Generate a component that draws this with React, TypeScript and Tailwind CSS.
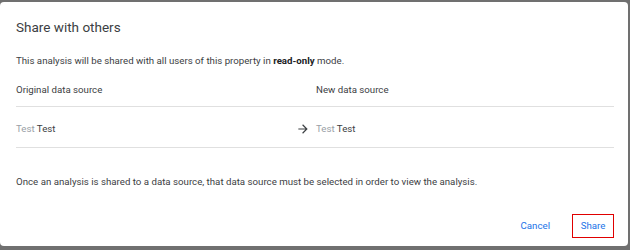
export default function App() {
  return (
    <div
      className="w-[630px] h-[250px] bg-[#707070] pt-[2px] pr-[2px] pb-[4px] overflow-hidden"
      style={{ fontFamily: "Roboto, 'Liberation Sans', sans-serif" }}
    >
      <div className="h-full bg-white rounded-[4px] flex flex-col pl-4 pr-[14px]">
        <h2 className="text-[13.5px] text-[#3c4043] mt-[15px] leading-[20px]">Share with others</h2>

        <p className="text-[9.7px] text-[#3c4043] mt-[17px] leading-[14px]">
          This analysis will be shared with all users of this property in{" "}
          <span className="font-bold text-[#202124]">read-only</span> mode.
        </p>

        <div className="grid grid-cols-[300px_1fr] mt-[15px] text-[9.7px] leading-[14px] text-[#3c4043] border-b border-[#e0e0e0] pb-[9px]">
          <div>Original data source</div>
          <div>New data source</div>
        </div>

        <div className="grid grid-cols-[300px_1fr] items-center h-[41px] pt-[4px] text-[9.7px] border-b border-[#e0e0e0]">
          <div className="flex items-center justify-between pr-[6px]">
            <span>
              <span className="text-[#9aa0a6]">Test</span> <span className="text-[#3c4043]">Test</span>
            </span>
            <svg width="14" height="14" viewBox="0 0 24 24" fill="#3c4043">
              <path d="M12 4l-1.41 1.41L16.17 11H4v2h12.17l-5.58 5.59L12 20l8-8z" />
            </svg>
          </div>
          <div>
            <span className="text-[#9aa0a6]">Test</span> <span className="text-[#3c4043]">Test</span>
          </div>
        </div>

        <p className="text-[9.7px] text-[#3c4043] mt-[27px] leading-[14px]">
          Once an analysis is shared to a data source, that data source must be selected in order to view the
          analysis.
        </p>

        <div className="mt-auto mb-[8px] flex justify-end items-center gap-[22px] text-[9.7px] text-[#1a73e8]">
          <button className="px-0">Cancel</button>
          <button className="w-[42px] h-[24px] border border-[#e00000] flex items-center justify-center">
            Share
          </button>
        </div>
      </div>
    </div>
  );
}
